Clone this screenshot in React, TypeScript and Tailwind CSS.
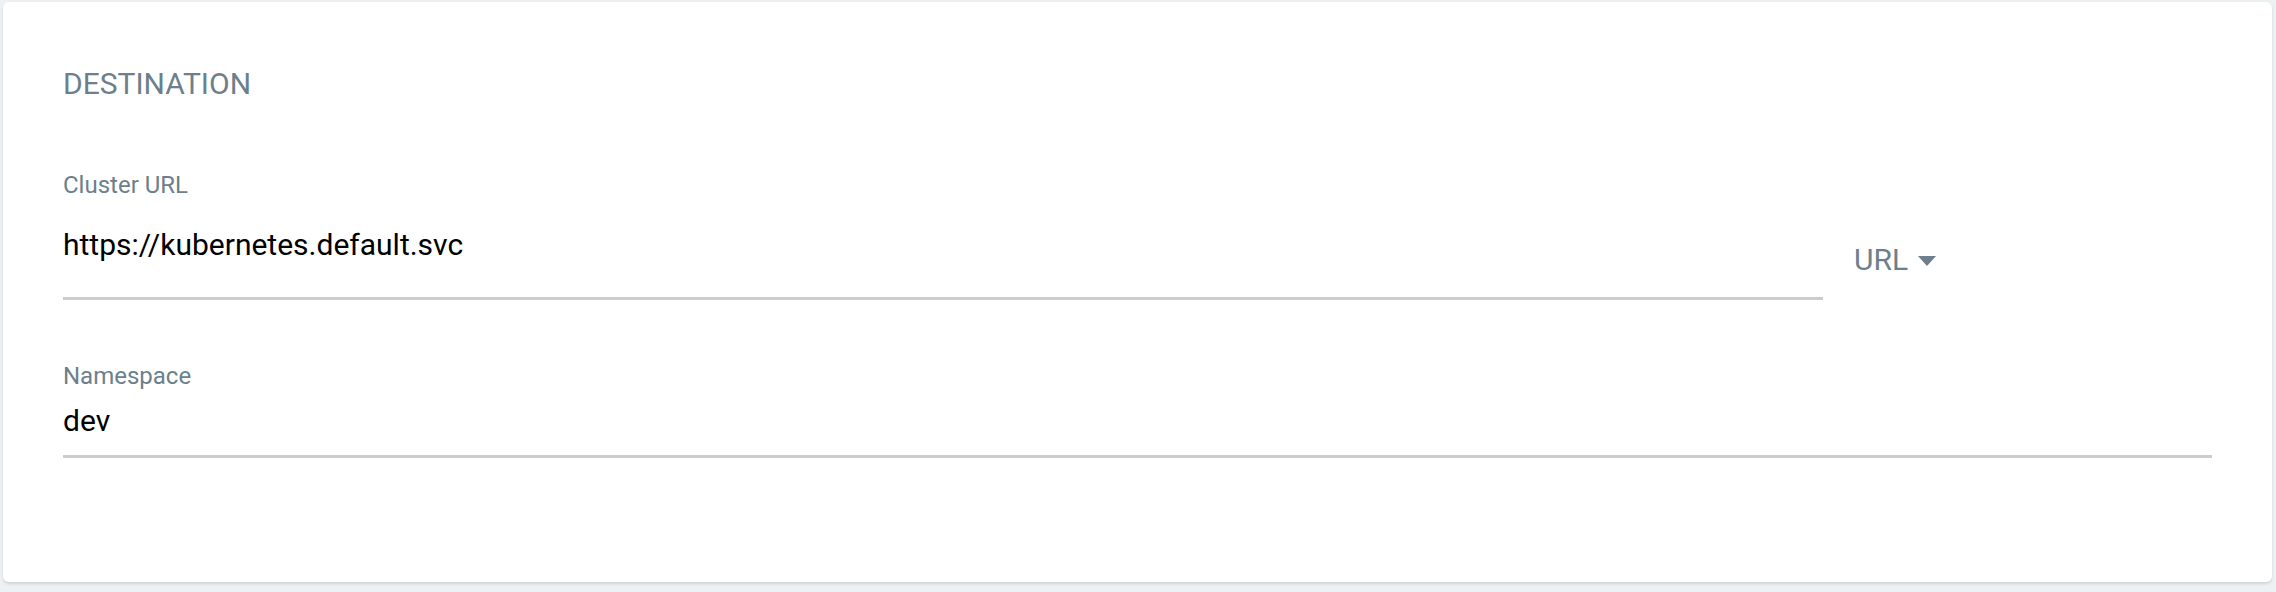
export default function App() {
  return (
    <div
      className="min-h-screen bg-[#eef1f4] pt-[2px] pl-[3px] pr-[4px]"
      style={{ fontFamily: "Roboto, 'Liberation Sans', sans-serif" }}
    >
      <div className="h-[580px] rounded-[6px] bg-white pl-[60px] pr-[60px] pt-[64px] shadow-[0_2px_3px_rgba(0,0,0,0.12)]">
        <h2 className="text-[30px] leading-[36px] text-[#6d7f8b]">DESTINATION</h2>

        <div className="mt-[69px] flex items-start">
          <div className="w-[1760px]">
            <div className="text-[24px] leading-[28px] text-[#6d7f8b]">Cluster URL</div>
            <div className="mt-[28px] text-[30px] leading-[36px] text-black">
              https://kubernetes.default.svc
            </div>
            <div className="mt-[34px] h-[3px] bg-[#cccccc]" />
          </div>
          <div className="ml-[31px] mt-[71px] flex items-center gap-[10px] text-[30px] leading-[36px] text-[#6d7f8b]">
            <span>URL</span>
            <svg width="18" height="10" viewBox="0 0 18 10" className="mt-[2px]">
              <path d="M0 0h18L9 10z" fill="#6d7f8b" />
            </svg>
          </div>
        </div>

        <div className="mt-[62px]">
          <div className="text-[24px] leading-[28px] text-[#6d7f8b]">Namespace</div>
          <div className="mt-[13px] text-[30px] leading-[36px] text-black">dev</div>
          <div className="mt-[16px] h-[3px] bg-[#cccccc]" />
        </div>
      </div>
    </div>
  );
}
